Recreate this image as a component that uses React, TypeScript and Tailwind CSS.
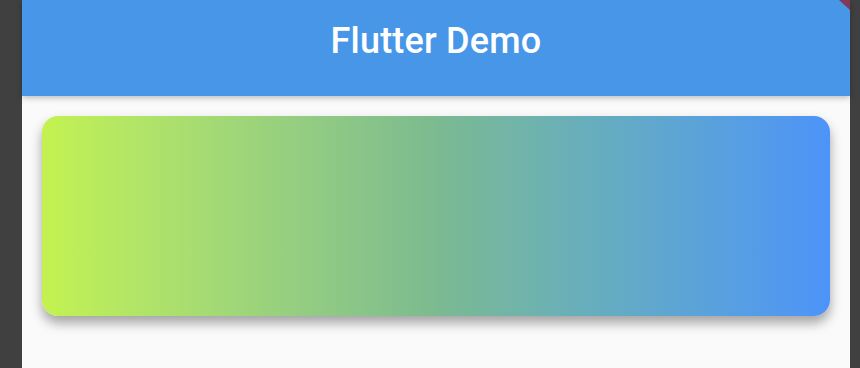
export default function App() {
  return (
    <div className="flex w-[860px] h-[368px] bg-[#404040] overflow-hidden">
      {/* device frame strips left/right */}
      <div className="w-[22px] shrink-0" />
      <div className="relative flex flex-col w-[828px] h-full bg-[#fafafa]">
        {/* App bar */}
        <header className="relative z-10 h-[96px] shrink-0 flex items-center justify-center bg-[#4796e8] shadow-[0_2px_6px_rgba(0,0,0,0.25)]">
          <h1 className="text-white text-[36px] font-medium leading-none tracking-[0.2px] mt-[-14px] font-['Roboto',Arial,sans-serif]">
            Flutter Demo
          </h1>
        </header>

        {/* Gradient card */}
        <div className="px-[20px] pt-[20px]">
          <div className="h-[200px] rounded-[16px] bg-gradient-to-r from-[#c3f24f] via-[#7cba90] to-[#4e93f9] shadow-[0_7px_12px_rgba(0,0,0,0.35)]" />
        </div>

        {/* debug banner sliver */}
        <svg className="absolute top-0 right-0 z-20" width="12" height="12" viewBox="0 0 12 12">
          <polygon points="1,0 12,0 12,10" fill="#7e3a58" />
        </svg>
      </div>
      <div className="w-[10px] shrink-0" />
    </div>
  );
}
